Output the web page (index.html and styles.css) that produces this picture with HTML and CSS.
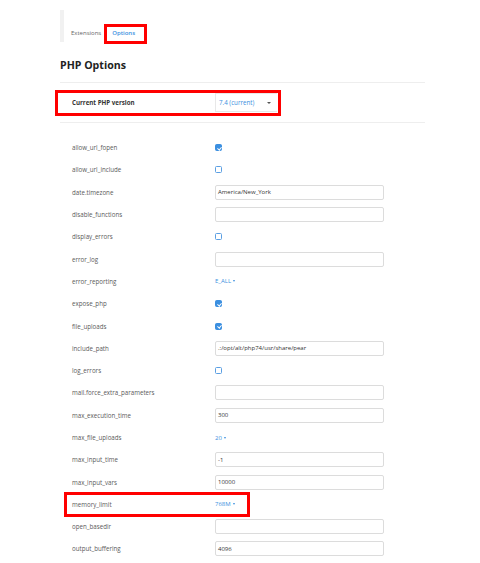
FILE: index.html
```html
<!DOCTYPE html>
<html>
<head>
<meta charset="utf-8">
<link rel="stylesheet" href="styles.css">
</head>
<body>
<div class="page">
  <div class="tabs">
    <span class="tab">Extensions</span>
    <span class="tab active">Options</span>
  </div>
  <h1 class="title">PHP Options</h1>
  <div class="version-row">
    <span class="version-label">Current PHP version</span>
    <span class="select">7.4 (current)<span class="caret"></span></span>
  </div>
  <div class="list">
    <div class="row"><span class="label">allow_url_fopen</span><span class="cb checked"></span></div>
    <div class="row"><span class="label">allow_url_include</span><span class="cb"></span></div>
    <div class="row"><span class="label">date.timezone</span><span class="input">America/New_York</span></div>
    <div class="row"><span class="label">disable_functions</span><span class="input"></span></div>
    <div class="row"><span class="label">display_errors</span><span class="cb"></span></div>
    <div class="row"><span class="label">error_log</span><span class="input"></span></div>
    <div class="row"><span class="label">error_reporting</span><span class="dd">E_ALL<span class="dcaret"></span></span></div>
    <div class="row"><span class="label">expose_php</span><span class="cb checked"></span></div>
    <div class="row"><span class="label">file_uploads</span><span class="cb checked"></span></div>
    <div class="row"><span class="label">include_path</span><span class="input">.:/opt/alt/php74/usr/share/pear</span></div>
    <div class="row"><span class="label">log_errors</span><span class="cb"></span></div>
    <div class="row"><span class="label">mail.force_extra_parameters</span><span class="input"></span></div>
    <div class="row"><span class="label">max_execution_time</span><span class="input">300</span></div>
    <div class="row"><span class="label">max_file_uploads</span><span class="dd">20<span class="dcaret"></span></span></div>
    <div class="row"><span class="label">max_input_time</span><span class="input">-1</span></div>
    <div class="row"><span class="label">max_input_vars</span><span class="input">10000</span></div>
    <div class="row mem"><span class="label">memory_limit</span><span class="dd">768M<span class="dcaret"></span></span></div>
    <div class="row"><span class="label">open_basedir</span><span class="input"></span></div>
    <div class="row"><span class="label">output_buffering</span><span class="input">4096</span></div>
  </div>
</div>
</body>
</html>
```
FILE: styles.css
```css
html, body {
  margin: 0;
  padding: 0;
  background: #ffffff;
}
body {
  font-family: "Open Sans", "Liberation Sans", sans-serif;
  color: #555;
}
.page {
  width: 365px;
  margin-left: 60px;
  padding-top: 10px;
}
.tabs {
  display: flex;
  align-items: flex-end;
  height: 32px;
  border-left: 4px solid #f1f1f1;
  box-sizing: border-box;
}
.tab {
  font-size: 6px;
  color: #666;
  padding: 0 0 4px 7px;
  line-height: 9px;
}
.tab.active {
  color: #3b8fe0;
  font-weight: 600;
  position: relative;
  padding-left: 11px;
}
.tab.active::after {
  content: "";
  position: absolute;
  left: 3px;
  top: -5px;
  width: 43px;
  height: 20px;
  border: 3px solid #ff0000;
  box-sizing: border-box;
}
.title {
  font-size: 10.6px;
  font-weight: 700;
  color: #222;
  margin: 0;
  padding: 16px 0 10px 0;
  line-height: 14px;
  border-bottom: 1px solid #eeeeee;
}
.version-row {
  display: flex;
  align-items: center;
  height: 39px;
  padding-left: 12px;
  border-bottom: 1px solid #eeeeee;
  position: relative;
}
.version-row::after {
  content: "";
  position: absolute;
  left: -5px;
  top: 7px;
  width: 226px;
  height: 26px;
  border: 3px solid #ff0000;
  box-sizing: border-box;
}
.version-label {
  width: 143px;
  font-size: 6.2px;
  font-weight: 700;
  color: #333;
}
.select {
  display: flex;
  align-items: center;
  width: 62px;
  height: 19px;
  box-sizing: border-box;
  border: 1px solid #e8e8e8;
  border-right: none;
  padding-left: 3px;
  font-size: 6.2px;
  color: #3b8fe0;
  position: relative;
}
.caret {
  position: absolute;
  right: 6px;
  top: 8px;
  border-left: 2px solid transparent;
  border-right: 2px solid transparent;
  border-top: 2px solid #555;
}
.list {
  padding-top: 13.5px;
}
.row {
  display: flex;
  align-items: center;
  height: 22.3px;
  padding-left: 12px;
  position: relative;
}
.label {
  width: 143px;
  flex: none;
  font-size: 6.2px;
  color: #5a5a5a;
}
.cb {
  width: 7px;
  height: 7px;
  box-sizing: border-box;
  border: 1.2px solid #5b9fe3;
  border-radius: 1.5px;
  position: relative;
}
.cb.checked {
  background: #3b8fe0;
  border-color: #3b8fe0;
}
.cb.checked::after {
  content: "";
  position: absolute;
  left: 1.6px;
  top: 0.4px;
  width: 1.6px;
  height: 3.2px;
  border-right: 1px solid #fff;
  border-bottom: 1px solid #fff;
  transform: rotate(40deg);
}
.input {
  display: flex;
  align-items: center;
  width: 169px;
  height: 15px;
  box-sizing: border-box;
  border: 1px solid #dcdcdc;
  border-radius: 2px;
  padding-left: 2px;
  font-size: 6px;
  color: #333;
}
.dd {
  display: flex;
  align-items: center;
  font-size: 6px;
  color: #3b8fe0;
}
.dcaret {
  margin-left: 2px;
  border-left: 1.7px solid transparent;
  border-right: 1.7px solid transparent;
  border-top: 2px solid #3b8fe0;
}
.mem::after {
  content: "";
  position: absolute;
  left: 4px;
  top: -1px;
  width: 186px;
  height: 25px;
  border: 3px solid #ff0000;
  box-sizing: border-box;
}
```
